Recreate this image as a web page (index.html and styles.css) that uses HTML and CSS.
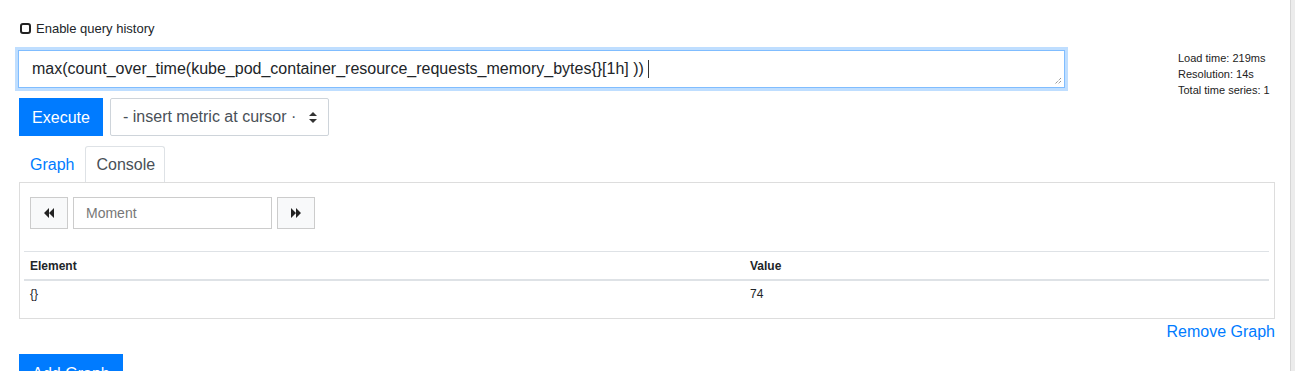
FILE: index.html
```html
<!DOCTYPE html>
<html lang="en">
<head>
    <meta charset="UTF-8">
    <meta name="viewport" content="width=device-width, initial-scale=1.0">
    <title>Prometheus Time Series Collection and Processing Server</title>
    <link rel="stylesheet" href="styles.css">
</head>
<body>
    <div class="screen">
        <div class="page">
            <label class="history">
                <input type="checkbox" class="history-box">
                <span>Enable query history</span>
            </label>

            <div class="query-row">
                <div class="query-col">
                    <div class="expr">
                        <span class="expr-text">max(count_over_time(kube_pod_container_resource_requests_memory_bytes{}[1h] ))&nbsp;</span><span class="caret"></span>
                        <svg class="grip" width="8" height="8" viewBox="0 0 8 8">
                            <path d="M7 1 L1 7 M7 4 L4 7" stroke="#6b6b6b" stroke-width="1" stroke-dasharray="1 1" fill="none"/>
                        </svg>
                    </div>
                    <div class="controls">
                        <button class="btn-primary execute">Execute</button>
                        <div class="metric-select">
                            <span>- insert metric at cursor ·</span>
                            <svg class="updown" width="8" height="11" viewBox="0 0 8 11">
                                <path d="M4 0 L8 4 L0 4 Z M4 11 L8 7 L0 7 Z" fill="#333"/>
                            </svg>
                        </div>
                    </div>
                </div>
                <div class="stats">
                    <div>Load time: 219ms</div>
                    <div>Resolution: 14s</div>
                    <div>Total time series: 1</div>
                </div>
            </div>

            <div class="tabs">
                <a class="tab">Graph</a>
                <a class="tab active">Console</a>
            </div>

            <div class="tab-box">
                <div class="moment">
                    <button class="btn-light">
                        <svg width="12" height="10" viewBox="0 0 12 10"><path d="M6 0 L6 10 L1 5 Z M11 0 L11 10 L6 5 Z" fill="#222"/></svg>
                    </button>
                    <input class="moment-input" type="text" placeholder="Moment">
                    <button class="btn-light">
                        <svg width="12" height="10" viewBox="0 0 12 10"><path d="M1 0 L1 10 L6 5 Z M6 0 L6 10 L11 5 Z" fill="#222"/></svg>
                    </button>
                </div>
                <table class="results">
                    <thead>
                        <tr><th class="col-element">Element</th><th>Value</th></tr>
                    </thead>
                    <tbody>
                        <tr><td>{}</td><td>74</td></tr>
                    </tbody>
                </table>
            </div>

            <div class="remove-row"><a class="link">Remove Graph</a></div>

            <button class="btn-primary add">Add Graph</button>
        </div>
        <div class="scrollbar"></div>
    </div>
</body>
</html>
```

FILE: styles.css
```css
body {
    margin: 0;
    font-family: "Liberation Sans", Arial, sans-serif;
    color: #212529;
    background-color: #fff;
    overflow: hidden;
}

.screen {
    display: flex;
    height: 371px;
    overflow: hidden;
}

.page {
    width: 1256px;
    padding: 21px 15px 0 19px;
}

.scrollbar {
    width: 4px;
    margin-left: auto;
    background-color: #ececec;
    border-left: 1px solid #d6d6d6;
}

.history {
    display: flex;
    align-items: center;
    font-size: 13px;
    height: 14px;
}

.history-box {
    appearance: none;
    width: 11px;
    height: 11px;
    margin: 0 5px 0 1px;
    border: 2px solid #222;
    border-radius: 3px;
    box-sizing: border-box;
}

.query-row {
    display: flex;
    margin-top: 15px;
}

.query-col {
    width: 1047px;
    margin-left: -1px;
}

.expr {
    position: relative;
    height: 38px;
    box-sizing: border-box;
    border: 1px solid #80bdff;
    box-shadow: 0 0 0 3px rgba(0, 123, 255, 0.25);
    display: flex;
    align-items: center;
    padding-left: 13px;
    font-size: 16px;
    color: #212529;
}

.caret {
    display: inline-block;
    width: 1px;
    height: 18px;
    background-color: #333;
}

.grip {
    position: absolute;
    right: 2px;
    bottom: 2px;
}

.controls {
    display: flex;
    gap: 7px;
    margin-top: 10px;
    margin-left: 1px;
}

.btn-primary {
    background-color: #007bff;
    border: none;
    color: #fff;
    font-family: inherit;
    font-size: 16px;
    height: 38px;
    padding: 2px 13px 0;
    border-radius: 0;
}

.execute {
    width: 84px;
}

.metric-select {
    width: 219px;
    height: 38px;
    box-sizing: border-box;
    border: 1px solid #ced4da;
    border-radius: 2px;
    display: flex;
    align-items: center;
    justify-content: space-between;
    padding: 0 11px 0 12px;
    font-size: 16px;
    color: #495057;
}

.stats {
    margin-left: auto;
    margin-right: 2px;
    width: 95px;
    font-size: 11px;
    line-height: 16px;
    color: #222;
}

.tabs {
    display: flex;
    margin-top: 10px;
}

.tab {
    display: block;
    padding: 0 11px 0 11px;
    height: 35px;
    line-height: 35px;
    font-size: 16px;
    color: #007bff;
    border: 1px solid transparent;
    border-bottom: none;
    border-radius: 3px 3px 0 0;
}

.tab.active {
    color: #495057;
    background-color: #fff;
    border-color: #dee2e6;
    margin-bottom: -1px;
    padding: 0 9px 0 10px;
    position: relative;
}

.tab:first-child {
    padding-left: 10px;
    margin-right: -1px;
}

.tab-box {
    border: 1px solid #ddd;
    padding: 14px 4px 11px;
}

.moment {
    display: flex;
    gap: 5px;
    margin-left: 6px;
}

.btn-light {
    width: 38px;
    height: 32px;
    background-color: #f8f9fa;
    border: 1px solid #ccc;
    border-radius: 0;
    display: flex;
    align-items: center;
    justify-content: center;
}

.moment-input {
    width: 199px;
    height: 32px;
    box-sizing: border-box;
    border: 1px solid #ccc;
    padding: 0 12px;
    font-family: inherit;
    font-size: 14px;
    color: #495057;
}

.moment-input::placeholder {
    color: #777;
}

.results {
    width: 1245px;
    margin-top: 22px;
    border-collapse: collapse;
    font-size: 12px;
}

.results th {
    text-align: left;
    font-weight: bold;
    height: 27px;
    padding: 0 6px;
    border-top: 1px solid #dee2e6;
    border-bottom: 2px solid #dee2e6;
}

.results .col-element {
    width: 708px;
}

.results td {
    height: 26px;
    padding: 0 6px;
}

.remove-row {
    display: flex;
    justify-content: flex-end;
    margin-top: 2px;
    height: 22px;
    line-height: 22px;
}

.link {
    color: #007bff;
    font-size: 16px;
}

.add {
    margin-top: 11px;
    width: 104px;
}
```
